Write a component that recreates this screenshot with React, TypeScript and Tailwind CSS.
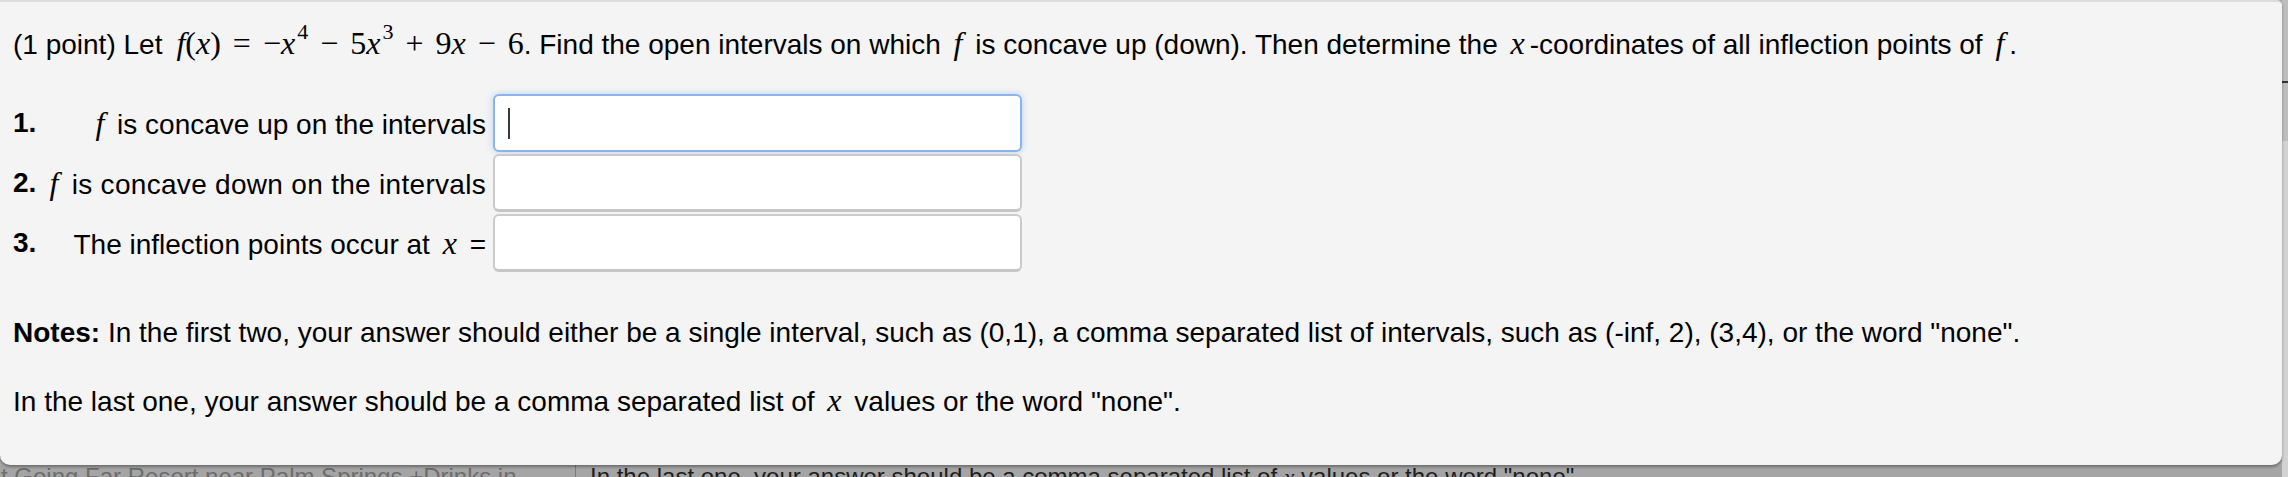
const sans = "font-['Liberation_Sans',Arial,sans-serif]";

function M({ children, pad = false }: { children: React.ReactNode; pad?: boolean }) {
  return (
    <span className={pad ? "px-[5px] font-['Liberation_Serif',serif] text-[32px] italic" : "font-['Liberation_Serif',serif] text-[32px] italic"}>
      {children}
    </span>
  );
}

function N({ children }: { children: React.ReactNode }) {
  return <span className="font-['Liberation_Serif',serif] text-[32px]">{children}</span>;
}

function Op({ children }: { children: React.ReactNode }) {
  return <span className="font-['Liberation_Serif',serif] text-[32px] mx-[12px]">{children}</span>;
}

function Sup({ children }: { children: React.ReactNode }) {
  return (
    <sup className="font-['Liberation_Serif',serif] text-[22px] relative -top-[15px] ml-[2px]">{children}</sup>
  );
}

function AnswerBox({ focused = false }: { focused?: boolean }) {
  return (
    <div
      className={
        focused
          ? "flex h-[58px] items-center rounded-[6px] border-2 border-[#8ab4ee] bg-white pl-[13px] shadow-[0_0_7px_rgba(120,165,235,0.45)]"
          : "h-[58px] rounded-[6px] border-2 border-[#cbcbcb] border-b-[3px] border-b-[#c6c6c6] bg-white"
      }
    >
      {focused ? <span className="h-[31px] w-[2px] bg-[#3a3a3a]" /> : null}
    </div>
  );
}

export default function App() {
  return (
    <div className={`relative h-[477px] w-[2288px] overflow-hidden bg-[#a9a9a9] ${sans}`}>
      {/* window behind the dialog */}
      <div className="absolute left-0 top-[465px] flex h-[12px] w-full items-start bg-[#a5a5a5]">
        <div className="w-[575px] overflow-hidden whitespace-nowrap pl-[1px] text-[24px] leading-[22px] text-[#6d6d6d] mt-[1px]">
          t Going Far Resort near Palm Springs +Drinks in
        </div>
        <div className="h-full w-[1px] bg-[#7a7a7a]" />
        <div className="overflow-hidden whitespace-nowrap pl-[14px] text-[24px] leading-[22px] text-[#1e1e1e] mt-[1px]">
          In the last one, your answer should be a comma separated list of{" "}
          <i className="font-['Liberation_Serif',serif]">x</i> values or the word "none"
        </div>
      </div>
      <div className="absolute right-0 top-0 h-full w-[6px] bg-[#bdbdbd]">
        <div className="mt-[81px] h-[2px] w-full bg-[#333]" />
        <div className="mt-[58px] h-full w-full bg-[#d2d2d2]" />
      </div>

      {/* dialog */}
      <div className="absolute left-0 top-0 h-[465px] w-[2282px] rounded-b-[10px] rounded-tr-[5px] border-t-2 border-[#dcdcdc] bg-[#f4f4f4] px-[13px] pt-[23px] text-black shadow-[0_2px_3px_rgba(0,0,0,0.35)]">
        <p className="whitespace-nowrap text-[28px] leading-[36px]">
          (1 point) Let<span className="ml-[14px]" />
          <M>f</M>
          <N>(</N>
          <M>x</M>
          <N>)</N>
          <Op>=</Op>
          <N>−</N>
          <M>x</M>
          <Sup>4</Sup>
          <Op>−</Op>
          <N>5</N>
          <M>x</M>
          <Sup>3</Sup>
          <Op>+</Op>
          <N>9</N>
          <M>x</M>
          <Op>−</Op>
          <N>6</N>. Find the open intervals on which <M pad>f</M> is concave up (down). Then determine the{" "}
          <M pad>x</M>-coordinates of all inflection points of <M pad>f</M>.
        </p>

        <div className="mt-[31px] grid grid-cols-[473px_529px] gap-x-[7px] gap-y-[2px]">
          <div className="flex items-center justify-between whitespace-nowrap text-[28px]">
            <b>1.</b>
            <span>
              <M pad>f</M> is concave up on the intervals
            </span>
          </div>
          <AnswerBox focused />

          <div className="flex items-center justify-between whitespace-nowrap text-[28px]">
            <b>2.</b>
            <span className="tracking-[0.3px]">
              <M pad>f</M> is concave down on the intervals
            </span>
          </div>
          <AnswerBox />

          <div className="flex items-center justify-between whitespace-nowrap text-[28px]">
            <b>3.</b>
            <span>
              The inflection points occur at <M pad>x</M> =
            </span>
          </div>
          <AnswerBox />
        </div>

        <p className="mt-[43px] whitespace-nowrap text-[28px] leading-[36px]">
          <b>Notes:</b> In the first two, your answer should either be a single interval, such as (0,1), a comma separated list of
          intervals, such as (-inf, 2), (3,4), or the word "none".
        </p>
        <p className="mt-[31px] whitespace-nowrap text-[28px] leading-[36px]">
          In the last one, your answer should be a comma separated list of <M pad>x</M> values or the word "none".
        </p>
      </div>
    </div>
  );
}
